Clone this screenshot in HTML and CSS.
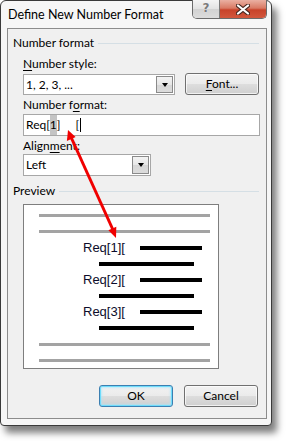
FILE: index.html
```html
<!DOCTYPE html>
<html lang="en">
<head>
  <meta charset="UTF-8">
  <title>Define New Number Format</title>
  <link rel="stylesheet" href="styles.css">
</head>
<body>
  <div class="window">
    <div class="titlebar">
      <span class="title">Define New Number Format</span>
      <div class="caption-btns">
        <div class="cap-help">?</div>
        <div class="cap-close">
          <svg width="14" height="11" viewBox="0 0 14 11">
            <path d="M2 1.5 L12 9.5 M12 1.5 L2 9.5" stroke="#4a2a22" stroke-width="4.2" stroke-linecap="round"/>
            <path d="M2 1.5 L12 9.5 M12 1.5 L2 9.5" stroke="#fff" stroke-width="2.2" stroke-linecap="round"/>
          </svg>
        </div>
      </div>
    </div>

    <div class="client">
      <!-- Number format group -->
      <div class="group-head">
        <span>Number format</span>
        <div class="rule"></div>
      </div>

      <div class="field-label first"><u>N</u>umber style:</div>
      <div class="row">
        <div class="combo combo-style">
          <span class="combo-text">1, 2, 3, ...</span>
          <span class="drop"><i class="tri"></i></span>
        </div>
        <div class="button btn-font"><u>F</u>ont...</div>
      </div>

      <div class="field-label">Number f<u>o</u>rmat:</div>
      <div class="textbox">Req[<span class="sel">1</span>]<span class="gap"></span>[<span class="caret"></span></div>

      <div class="field-label">Align<u>m</u>ent:</div>
      <div class="combo combo-align">
        <span class="combo-text">Left</span>
        <span class="drop"><i class="tri"></i></span>
      </div>

      <!-- Preview group -->
      <div class="group-head preview-head">
        <span>Preview</span>
        <div class="rule"></div>
      </div>

      <div class="preview">
        <div class="gray-line first"></div>
        <div class="gray-line"></div>

        <div class="item first">
          <div class="item-row"><span class="num">Req[1][</span><span class="bar"></span></div>
          <div class="bar bar-long"></div>
        </div>
        <div class="item">
          <div class="item-row"><span class="num">Req[2][</span><span class="bar"></span></div>
          <div class="bar bar-long"></div>
        </div>
        <div class="item">
          <div class="item-row"><span class="num">Req[3][</span><span class="bar"></span></div>
          <div class="bar bar-long"></div>
        </div>

        <div class="gray-line after"></div>
        <div class="gray-line"></div>
      </div>

      <div class="actions">
        <div class="button btn-ok">OK</div>
        <div class="button">Cancel</div>
      </div>
    </div>
  </div>

  <!-- red callout arrow drawn over the dialog -->
  <svg class="callout" width="288" height="441" viewBox="0 0 288 441">
    <line x1="70.5" y1="136" x2="113.5" y2="231" stroke="#f00000" stroke-width="3"/>
    <polygon points="68,130 66.9,141 75.6,137" fill="#f00000"/>
    <polygon points="116,238 108.4,230.3 116.3,226.7" fill="#f00000"/>
  </svg>
</body>
</html>
```

FILE: styles.css
```css
body {
  margin: 0;
  width: 288px;
  height: 441px;
  background: #fff;
  font-family: 'Lato', 'Noto Sans', sans-serif;
  font-size: 12px;
  color: #000;
  position: relative;
  overflow: hidden;
}
u { text-decoration: underline; text-underline-offset: 2px; }

.window {
  width: 270px;
  height: 424px;
  border: 1px solid #3a3a3a;
  border-radius: 6px 6px 4px 4px;
  background: #f6f6f6;
  box-shadow: 5px 7px 7px rgba(0,0,0,0.5);
}

.titlebar {
  display: flex;
  align-items: flex-start;
  height: 27px;
  padding-left: 7px;
  padding-right: 4px;
}
.title {
  padding-top: 6px;
  line-height: 15px;
  font-size: 12.5px;
}
.caption-btns {
  margin-left: auto;
  margin-top: -1px;
  display: flex;
  height: 18px;
  border: 1px solid #6b6b6b;
  border-top: none;
  border-radius: 0 0 5px 5px;
  overflow: hidden;
}
.cap-help {
  width: 26px;
  border-right: 1px solid #7a7a7a;
  background: linear-gradient(#f4f4f4, #e2e2e2 50%, #d2d2d2 51%, #dcdcdc);
  text-align: center;
  font-family: 'DejaVu Sans', sans-serif;
  font-size: 12px;
  font-weight: bold;
  line-height: 17px;
  color: #7a7a7a;
  text-shadow: 0 0 1px #fff;
}
.cap-close {
  width: 46px;
  background: linear-gradient(#eab0a2, #d97a64 45%, #c8432a 55%, #d2573d);
  display: flex;
  align-items: center;
  justify-content: center;
}

.client {
  margin: 0 4px 0 6px;
  height: 389px;
  border: 1px solid #8c8c8c;
  background: #f0f0f0;
}

.group-head {
  display: flex;
  align-items: center;
  height: 14px;
  margin-top: 7px;
  padding-left: 5px;
  padding-right: 7px;
  line-height: 14px;
}
.group-head .rule {
  flex: 1;
  height: 1px;
  margin-left: 4px;
  background: #d5dfe5;
}
.preview-head { margin-top: 8px; }

.field-label {
  height: 14px;
  line-height: 14px;
  margin-top: 3px;
  padding-left: 15px;
}
.field-label.first { margin-top: 7px; }

.row {
  display: flex;
  align-items: flex-end;
  margin-top: 2px;
  padding-left: 15px;
}

.combo {
  display: flex;
  align-items: stretch;
  box-sizing: border-box;
  height: 21px;
  border: 1px solid #a7a7a7;
  background: #fff;
  margin-left: 15px;
}
.row .combo { margin-left: 0; }
.combo-style { width: 152px; }
.combo-align { width: 128px; height: 22px; margin-top: 1px; }
.combo-text {
  flex: 1;
  padding-left: 2px;
  line-height: 19px;
}
.drop {
  width: 15px;
  margin: 1px;
  border: 1px solid #8a8a8a;
  background: linear-gradient(#f3f3f3, #e6e6e6 50%, #d6d6d6 51%, #dcdcdc);
  display: flex;
  align-items: center;
  justify-content: center;
}
.tri {
  width: 0;
  height: 0;
  border-left: 3.5px solid transparent;
  border-right: 3.5px solid transparent;
  border-top: 4px solid #000;
}

.button {
  box-sizing: border-box;
  width: 74px;
  height: 22px;
  border: 1px solid #707070;
  border-radius: 3px;
  background: linear-gradient(#f2f2f2, #ebebeb 48%, #dddddd 52%, #cfcfcf);
  text-align: center;
  line-height: 20px;
  box-shadow: inset 0 0 0 1px rgba(255,255,255,0.7);
}
.btn-font { margin-left: 10px; height: 22px; }
.btn-ok {
  border-color: #3c7fb1;
  box-shadow: inset 0 0 0 1px #6fdcfb, inset 0 0 2px 2px rgba(160,230,255,0.6);
}

.textbox {
  box-sizing: border-box;
  width: 237px;
  height: 22px;
  margin: 2px 0 0 15px;
  border: 1px solid #a7a7a7;
  background: #fff;
  padding-left: 2px;
  line-height: 20px;
  display: flex;
  align-items: center;
}
.textbox .sel { background: #c4c4c4; }
.textbox .gap { display: inline-block; width: 15px; }
.textbox .caret {
  display: inline-block;
  width: 1px;
  height: 14px;
  margin-left: 1px;
  background: #000;
}

.preview {
  box-sizing: border-box;
  width: 196px;
  height: 165px;
  margin: 6px 0 0 15px;
  border: 1px solid #7e7e7e;
  background: #fff;
  padding-top: 9px;
}
.gray-line {
  width: 171px;
  height: 3px;
  margin: 13px 0 0 15px;
  background: #a3a3a3;
}
.gray-line.first { margin-top: 0; }
.gray-line.after { margin-top: 13px; }

.item { margin-top: 6px; }
.item.first { margin-top: 7px; }
.item-row {
  display: flex;
  align-items: center;
  height: 16px;
  padding-left: 59px;
}
.num {
  width: 57px;
  font-family: 'Liberation Sans', Arial, sans-serif;
  font-size: 13px;
  line-height: 16px;
  color: #0c0c2a;
}
.bar {
  display: block;
  width: 62px;
  height: 4px;
  background: #000;
}
.bar-long {
  width: 95px;
  margin: 6px 0 0 75px;
}

.actions {
  display: flex;
  justify-content: flex-end;
  gap: 11px;
  margin-top: 16px;
  padding-right: 8px;
}

.callout {
  position: absolute;
  left: 0;
  top: 0;
  pointer-events: none;
}
```
